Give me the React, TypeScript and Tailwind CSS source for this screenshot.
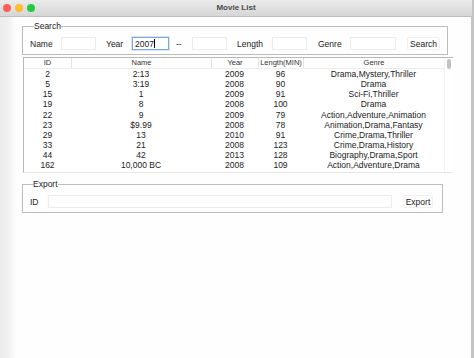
import React from 'react';

type Movie = { id: number; name: string; year: number; length: number; genre: string };

const movies: Movie[] = [
  { id: 2, name: '2:13', year: 2009, length: 96, genre: 'Drama,Mystery,Thriller' },
  { id: 5, name: '3:19', year: 2008, length: 90, genre: 'Drama' },
  { id: 15, name: '1', year: 2009, length: 91, genre: 'Sci-Fi,Thriller' },
  { id: 19, name: '8', year: 2008, length: 100, genre: 'Drama' },
  { id: 22, name: '9', year: 2009, length: 79, genre: 'Action,Adventure,Animation' },
  { id: 23, name: '$9.99', year: 2008, length: 78, genre: 'Animation,Drama,Fantasy' },
  { id: 29, name: '13', year: 2010, length: 91, genre: 'Crime,Drama,Thriller' },
  { id: 33, name: '21', year: 2008, length: 123, genre: 'Crime,Drama,History' },
  { id: 44, name: '42', year: 2013, length: 128, genre: 'Biography,Drama,Sport' },
  { id: 162, name: '10,000 BC', year: 2008, length: 109, genre: 'Action,Adventure,Drama' },
];

const cols = ['w-[47px]', 'w-[140px]', 'w-[47px]', 'w-[45px]', 'w-[141px]'];

function Field({ className = '' }: { className?: string }) {
  return <div className={`h-[13px] border border-[#ececec] bg-white ${className}`} />;
}

export default function App() {
  return <div className="flex h-[358px] w-[474px] flex-col overflow-hidden bg-[#c4c4c4] text-[8.5px] leading-[10px] text-[#222] [font-family:'Liberation_Sans',Arial,sans-serif]">
    <div className="relative mr-[2px] flex h-[17px] shrink-0 items-center justify-center border-b border-[#bdbdbd] bg-gradient-to-b from-[#ebebeb] to-[#d6d6d6]">
      <div className="absolute left-[3px] top-[4px] flex gap-[4px]">
        <span className="h-[8px] w-[8px] rounded-full bg-[#fd5f57]" />
        <span className="h-[8px] w-[8px] rounded-full bg-[#febc2e]" />
        <span className="h-[8px] w-[8px] rounded-full bg-[#28c840]" />
      </div>
      <span className="text-[8px] font-bold text-[#4a4a4a]">Movie List</span>
    </div>
    <div className="mr-[3px] flex-1 bg-[linear-gradient(to_right,#ececec_0px,#f1f1f1_9px,#fefefe_16px)] pl-[22px] pt-[4px]">
      <fieldset className="w-[424px] border border-[#bcbcbc] px-[7px] pb-[4px] pt-[6px]">
        <legend className="ml-[4px] px-0 leading-[10px]">Search</legend>
        <div className="flex h-[13px] items-center">
          <span className="w-[31px]">Name</span>
          <Field className="w-[35px]" />
          <span className="ml-[10px] w-[26px]">Year</span>
          <div className="flex h-[13px] w-[37px] items-center border border-[#7ea8dd] bg-white pl-[2px] shadow-[0_0_0_1px_#d6e4f6]">
            <span>2007</span><span className="ml-[0.5px] h-[9px] w-px bg-black" />
          </div>
          <span className="ml-[7px] w-[16px]">--</span>
          <Field className="w-[35px]" />
          <span className="ml-[10px] w-[35px]">Length</span>
          <Field className="w-[35px]" />
          <span className="ml-[11px] w-[32px]">Genre</span>
          <Field className="w-[46px]" />
          <button className="ml-[11px] h-[13px] w-[33px] rounded-[2px] border border-[#f0f0f0] bg-white text-center">Search</button>
        </div>
      </fieldset>

      <div className="ml-[1px] mt-[2px] flex h-[116px] w-[430px] border-y border-l border-[#b8b8b8] border-b-[#e6e6e6] bg-white">
        <div className="w-[420px]">
          <div className="flex h-[11px] items-center border-b border-[#ededed] text-[7.5px] text-[#333]">
            {['ID', 'Name', 'Year', 'Length(MIN)', 'Genre'].map((h, i) =>
              <div key={h} className={`${cols[i]} text-center ${i ? 'border-l border-[#e2e2e2]' : ''}`}>{h}</div>)}
          </div>
          {movies.map(m => <div key={m.id} className="flex h-[10.15px] items-center leading-[10px]">
            <div className={`${cols[0]} text-center`}>{m.id}</div>
            <div className={`${cols[1]} text-center`}>{m.name}</div>
            <div className={`${cols[2]} text-center`}>{m.year}</div>
            <div className={`${cols[3]} text-center`}>{m.length}</div>
            <div className={`${cols[4]} text-center`}>{m.genre}</div>
          </div>)}
        </div>
        <div className="flex w-[10px] justify-center border-l border-[#f0f0f0] pt-[1px]">
          <div className="h-[10px] w-[4px] rounded-full bg-[#c2c2c2]" />
        </div>
      </div>

      <fieldset className="mt-[6px] w-[421px] border border-[#bcbcbc] px-[7px] pb-[4px] pt-[6px]">
        <legend className="ml-[3px] px-0 leading-[10px]">Export</legend>
        <div className="flex h-[13px] items-center">
          <span className="w-[18px]">ID</span>
          <Field className="w-[344px]" />
          <button className="ml-[11px] h-[13px] w-[30px] rounded-[2px] border border-[#f0f0f0] bg-white text-center">Export</button>
        </div>
      </fieldset>
    </div>
  </div>;
}
